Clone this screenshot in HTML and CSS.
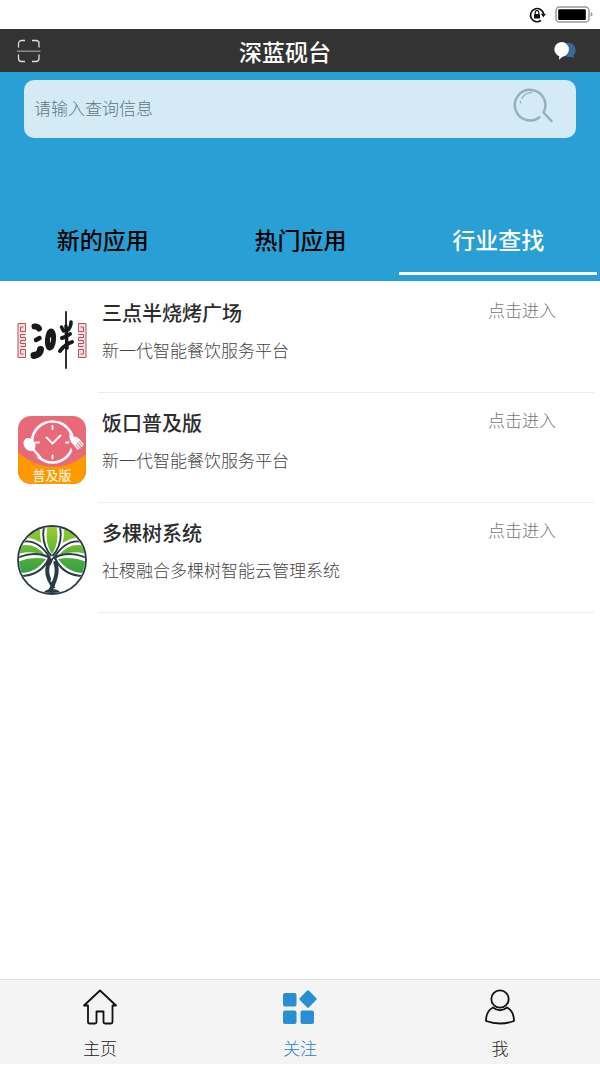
FILE: index.html
```html
<!DOCTYPE html>
<html lang="zh-CN">
<head>
<meta charset="utf-8">
<meta name="viewport" content="width=device-width, initial-scale=1">
<title>深蓝砚台</title>
<link rel="stylesheet" href="styles.css">
</head>
<body>
<div class="app">
  <div class="status">
    <svg width="18" height="16" viewBox="0 0 18 16" aria-label="旋转锁定">
      <path d="M12 13.500A6.600 6.600 0 1 1 14.600 7" fill="none" stroke="#111" stroke-width="1.600"/>
      <path d="M11.800 6.800h5.200l-2.600 3.400z" fill="#111"/>
      <rect x="5" y="7" width="6" height="4.600" rx=".6" fill="#111"/>
      <path d="M6.200 7.200V5.400a1.800 1.800 0 0 1 3.600 0v1.800" fill="none" stroke="#111" stroke-width="1.200"/>
    </svg>
    <svg width="38" height="18" viewBox="0 0 38 18" aria-label="电量">
      <rect x="1" y="1" width="33" height="15" rx="3.600" fill="#fff" stroke="#999" stroke-width="1.500"/>
      <rect x="3.200" y="3.200" width="27.600" height="10.800" rx="1" fill="#000"/>
      <path d="M35.600 6.300q2 .6 2 2.200t-2 2.200z" fill="#999"/>
    </svg>
  </div>

  <header class="header">
    <button class="icon-button" aria-label="扫一扫">
      <svg width="24" height="24" viewBox="0 0 24 24" fill="none" stroke="#ddd" stroke-width="1.300">
        <path d="M1.500 8.500v-4a3 3 0 0 1 3-3h3.500M15 1.500h4a3 3 0 0 1 3 3v4M1.500 15.500v4a3 3 0 0 0 3 3h3.500M15 22.500h4a3 3 0 0 0 3-3v-4"/>
        <path d="M0 12.200h23.500" stroke="#999"/>
      </svg>
    </button>
    <h1 class="header-title">深蓝砚台</h1>
    <button class="icon-button" aria-label="消息">
      <svg width="24" height="20" viewBox="0 0 24 20">
        <path d="M15 1.700a7.400 7.400 0 0 1 5.500 12.600l.3 2.700-3.500-1.300a7 7 0 0 1-9-6.700A7.300 7.300 0 0 1 15 1.700z" fill="#3b6997"/>
        <path d="M8.700 1a7.300 7.300 0 0 1 7.200 7.300c0 4.200-3.300 7-6.400 7.500L6 18.700l.3-3.500A7.300 7.300 0 0 1 8.700 1z" fill="#fff"/>
      </svg>
    </button>
  </header>

  <section class="hero">
    <form class="search">
      <input class="search-input" type="text" placeholder="请输入查询信息" aria-label="请输入查询信息">
      <button class="icon-button" type="button" aria-label="查询">
        <svg width="40" height="38" viewBox="0 0 40 38" fill="none" stroke="#96b0ba" stroke-linecap="round">
          <path d="M24.500 31.200A15.300 15.300 0 1 1 28.500 26.500L36.500 35" stroke-width="2.500" stroke-linejoin="round"/>
          <path d="M7 12.500q3-6 10-6.200M5.500 15.500v1.500" stroke-width="1.300"/>
        </svg>
      </button>
    </form>
    <nav class="tabs">
      <button class="tab">新的应用</button>
      <button class="tab">热门应用</button>
      <button class="tab tab-active" aria-current="page">行业查找</button>
    </nav>
  </section>

  <main class="list">
    <article class="item">
      <svg class="item-logo" viewBox="0 -5 70 70" aria-label="三点半">
        <rect x="1" y="13" width="8" height="35" fill="#f3dcdd"/>
        <rect x="61" y="13" width="8" height="35" fill="#f3dcdd"/>
        <g fill="none" stroke="#b45560" stroke-width="1">
          <path d="M1 13.500h7.500v8H3.500v-4.500h3M1 13.500v34h7.500v-8H3.500v4.500h3M8.500 24.500h-5v3h5v3h-5v3h5v3h-5"/>
          <path d="M69 13.500h-7.500v8h5v-4.500h-3M69 13.500v34h-7.500v-8h5v4.500h-3M61.500 24.500h5v3h-5v3h5v3h-5v3h5"/>
        </g>
        <g fill="none" stroke="#17191a" stroke-linecap="round" stroke-linejoin="round">
          <path d="M17.500 16.500q3-.5 4.500 2" stroke-width="6"/>
          <path d="M19 30l3.500-2" stroke-width="4.500"/>
          <path d="M17 45.500q6-1 6.500-6" stroke-width="7"/>
          <ellipse cx="33.500" cy="29.500" rx="3" ry="8.500" transform="rotate(5 33.500 29.500)" stroke-width="5"/>
          <path d="M33 22v4M33 34v4" stroke-width="3"/>
          <path d="M44.500 17l2 4M54 12q.5 4-3 8" stroke-width="3.500"/>
          <path d="M45 28q4-1 8-4M43 41q4-6 12-9" stroke-width="4"/>
          <path d="M49 2v56" stroke-width="1.800"/>
          <path d="M49 16l1 22" stroke-width="3.500"/>
        </g>
      </svg>
      <div class="item-body">
        <div class="item-text">
          <h2 class="item-title">三点半烧烤广场</h2>
          <p class="item-desc">新一代智能餐饮服务平台</p>
        </div>
        <a class="item-link" href="#">点击进入</a>
      </div>
    </article>

    <article class="item">
      <svg class="item-logo" viewBox="0 0 70 70" aria-label="饭口普及版">
        <defs><clipPath id="tile"><rect x="1" y="1" width="68" height="68" rx="13"/></clipPath></defs>
        <g clip-path="url(#tile)">
          <rect width="70" height="70" fill="#e86a79"/>
          <path d="M0 37Q35 66 70 39V70H0z" fill="#ff9900"/>
        </g>
        <circle cx="35.500" cy="27" r="20.500" fill="none" stroke="#fff" stroke-width="2.600"/>
        <g fill="none" stroke="#fff" stroke-width="1.800" stroke-linecap="round">
          <path d="M35.500 11v3M35.500 40.500v3M19 27.500h3M49 27.500h3M29.500 22.500l6 6 8-8"/>
        </g>
        <path d="M12 29l10 12" stroke="#e86a79" stroke-width="5"/>
        <ellipse cx="12.500" cy="29.500" rx="5.500" ry="7" transform="rotate(-35 12.500 29.500)" fill="#fff"/>
        <path d="M15 33l8 9" stroke="#fff" stroke-width="2.300" stroke-linecap="round"/>
        <path d="M53 27l5 9" stroke="#e86a79" stroke-width="4"/>
        <path d="M52 19.500Q55 22 60 22l3 3-5 5Q53 29 52 19.500z" fill="#fff"/>
        <path d="M56 28l5 6M58 27l5 6M60 25.500l5 6M61.500 24l4.500 5.500" stroke="#fff" stroke-width="1.300" stroke-linecap="round"/>
        <text class="logo-caption" x="35" y="65" text-anchor="middle">普及版</text>
      </svg>
      <div class="item-body">
        <div class="item-text">
          <h2 class="item-title">饭口普及版</h2>
          <p class="item-desc">新一代智能餐饮服务平台</p>
        </div>
        <a class="item-link" href="#">点击进入</a>
      </div>
    </article>

    <article class="item">
      <svg class="item-logo" viewBox="0 0 70 70" aria-label="多棵树">
        <defs>
          <linearGradient id="leaf" gradientUnits="userSpaceOnUse" x1="0" y1="2" x2="0" y2="50">
            <stop offset="0" stop-color="#99ce28"/><stop offset="1" stop-color="#2b9d45"/>
          </linearGradient>
          <clipPath id="disc"><circle cx="35" cy="35" r="33"/></clipPath>
        </defs>
        <circle cx="35" cy="35" r="33.500" fill="#fff"/>
        <g clip-path="url(#disc)">
          <g fill="url(#leaf)">
            <path d="M30.500 2C28.500 12 30 22 35 29 40 22 41.500 12 39.500 2z"/>
            <path d="M24 0Q22 10 24.500 18 15 12 5 13L10 2z"/>
            <path d="M46 0Q48 10 45.500 18 55 12 65 13L60 2z"/>
            <path d="M3 21Q17 17 28 30 15 25 0 29z"/>
            <path d="M67 21Q53 17 42 30 55 25 70 29z"/>
            <path d="M0 37Q14 31 29 34 19 48 3 48z"/>
            <path d="M70 37Q56 31 41 34 51 48 67 48z"/>
          </g>
          <g fill="none" stroke="#293b45" stroke-width="1.900">
            <path d="M27.500 0Q23 18 34.500 31M42.500 0Q47 18 35.500 31M4 17Q21 13 33 33M66 17Q49 13 37 33M0 33Q19 25 33 33M70 33Q51 25 37 33M3 51Q24 51 32 33M67 51Q46 51 38 33"/>
          </g>
          <path d="M33 33Q28 46 32 54T37 61" fill="none" stroke="#293b45" stroke-width="4"/>
          <path d="M38 36Q41 45 38.500 53T33 66" fill="none" stroke="#293b45" stroke-width="4"/>
          <path d="M40 31Q34 35 32 40" fill="none" stroke="#293b45" stroke-width="3"/>
          <path d="M37 34Q34 39 35 45T34 57" fill="none" stroke="#fff" stroke-width="1.200"/>
          <path d="M26 68q3-4 9-4 6 0 9 4z" fill="#293b45"/>
        </g>
        <circle cx="35" cy="35" r="34" fill="none" stroke="#293b45" stroke-width="1.800"/>
      </svg>
      <div class="item-body">
        <div class="item-text">
          <h2 class="item-title">多棵树系统</h2>
          <p class="item-desc">社稷融合多棵树智能云管理系统</p>
        </div>
        <a class="item-link" href="#">点击进入</a>
      </div>
    </article>
  </main>

  <nav class="tabbar">
    <a class="tabbar-item" href="#">
      <svg width="36" height="36" viewBox="0 0 36 36" fill="none" stroke="#111" stroke-width="1.800" stroke-linejoin="round" stroke-linecap="round">
        <path d="M18 1.500L34 16.500H30.500V33q0 1.500-1.500 1.500H23q-1.500 0-1.500-1.500V22.500H14.500V33q0 1.500-1.500 1.500H7.500Q6 34.500 6 33V16.500H2z"/>
      </svg>
      主页
    </a>
    <a class="tabbar-item tabbar-active" href="#" aria-current="page">
      <svg width="36" height="36" viewBox="0 0 36 36" fill="#288fd5">
        <rect x="1" y="4" width="13.500" height="13.500" rx="2"/>
        <rect x="1" y="21.500" width="13.500" height="13.500" rx="2"/>
        <rect x="18.500" y="21.500" width="13.500" height="13.500" rx="2"/>
        <rect x="19.500" y="3.500" width="13" height="13" rx="1.500" transform="rotate(45 26 10)"/>
      </svg>
      关注
    </a>
    <a class="tabbar-item" href="#">
      <svg width="36" height="36" viewBox="0 0 36 36" fill="none" stroke="#111" stroke-width="1.800" stroke-linejoin="round">
        <circle cx="18" cy="10" r="8.700"/>
        <path d="M11 18.500Q4 22 4 32 11 34.500 18 34.500T32 32Q32 22 25 18.500 18 24 11 18.500z"/>
      </svg>
      我
    </a>
  </nav>
</div>
</body>
</html>
```
FILE: styles.css
```css
* {
  box-sizing: border-box;
}

body {
  margin: 0;
  background: #fff;
  color: #222;
  font-family: "Noto Sans CJK SC", sans-serif;
  font-size: 17px;
  font-weight: 300;
  line-height: 24px;
}

h1, h2, p {
  margin: 0;
}

a {
  color: inherit;
  text-decoration: none;
}

button {
  padding: 0;
  border: 0;
  background: none;
  font: inherit;
}

svg {
  display: block;
  overflow: visible;
}

.app {
  display: flex;
  flex-direction: column;
  min-height: 100vh;
  padding-bottom: 3px;
}

.status {
  display: flex;
  justify-content: flex-end;
  align-items: center;
  gap: 8px;
  height: 29px;
  padding-right: 7px;
}

.header {
  display: flex;
  align-items: center;
  height: 43px;
  padding: 0 23px 0 17px;
  background: #333;
}

.header-title {
  flex: 1;
  padding-right: 24px;
  color: #fff;
  font-size: 23px;
  font-weight: 500;
  line-height: 32px;
  text-align: center;
}

.hero {
  display: flex;
  flex-direction: column;
  justify-content: space-between;
  height: 209px;
  padding: 8px 3px 6px;
  background: #289fd5;
}

.search {
  display: flex;
  align-items: center;
  height: 58px;
  margin: 0 21px;
  padding: 0 21px 8px 10px;
  border-radius: 10px;
  background: #d4ebf6;
}

.search-input {
  flex: 1;
  min-width: 0;
  height: 50px;
  padding: 4px 0 0;
  border: 0;
  outline: 0;
  background: none;
  font: inherit;
}

.search-input::placeholder {
  color: #5c7682;
}

.tabs {
  display: flex;
  padding-left: 1px;
}

.tab {
  flex: 1;
  height: 70px;
  border-bottom: 3px solid transparent;
  font-size: 23px;
  font-weight: 500;
  color: #000;
}

.tab-active {
  border-color: #fff;
  color: #fff;
}

.list {
  flex: 1;
  padding-top: 2px;
}

.item {
  display: flex;
  gap: 11px;
  height: 110px;
  padding: 0 6px 0 17px;
}

.item-logo {
  flex: none;
  width: 70px;
  height: 70px;
  margin-top: 22px;
}

.item-body {
  display: flex;
  flex: 1;
  justify-content: space-between;
  align-items: flex-start;
  padding: 15px 38px 0 4px;
  border-bottom: 1px solid #ececec;
}

.item-title {
  color: #2c2c2c;
  font-size: 20px;
  font-weight: 500;
  line-height: 30px;
}

.item-desc {
  margin-top: 10px;
  color: #444;
}

.item-link {
  color: #777;
}

.logo-caption {
  fill: #fff;
  font-size: 13px;
  font-weight: 400;
}

.tabbar {
  display: flex;
  height: 85px;
  border-top: 1px solid #ddd;
  background: #f4f4f4;
}

.tabbar-item {
  display: flex;
  flex: 1;
  flex-direction: column;
  align-items: center;
  gap: 11px;
  padding-top: 9px;
}

.tabbar-active {
  color: #1a84cf;
}
```
